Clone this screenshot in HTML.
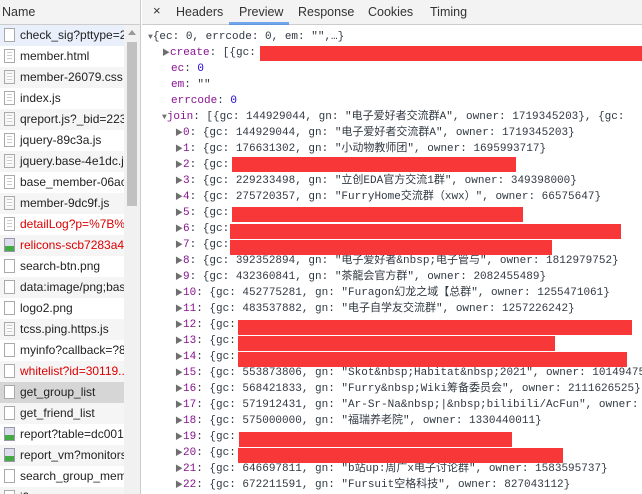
<!DOCTYPE html>
<html><head><meta charset="utf-8"><style>
*{margin:0;padding:0;box-sizing:border-box}
body{width:642px;height:494px;overflow:hidden;background:#fff;font-family:"Liberation Sans","Noto Sans CJK SC",sans-serif;position:relative}
#left{position:absolute;left:0;top:0;width:141px;height:494px;border-right:1px solid #ccc;overflow:hidden}
#lh{height:25px;background:#f3f3f3;border-bottom:1px solid #ccc;font-size:12.5px;color:#333;padding:5px 0 0 2px}
.r{position:absolute;left:0;width:124px;height:21px;font-size:12px;color:#222;line-height:21px;padding-left:20px;white-space:nowrap;overflow:hidden}
.r i{position:absolute;left:4px;top:3px;width:11px;height:14px;border:1px solid #aaa;background:#fff}
.r i.d{background:repeating-linear-gradient(#fff 0 2px,#ccc 2px 3px);background-clip:content-box;padding:2px}
.r i.img{border-color:#99a;background:linear-gradient(#dde 60%,#4a4 60%)}
.red{color:#d00}
#sb{position:absolute;left:124px;top:25px;width:16px;height:469px;background:#f1f1f1}
#th{position:absolute;left:3px;top:17px;width:10px;height:164px;background:#c1c1c1}
#tabs{position:absolute;left:142px;top:0;width:500px;height:25px;background:#f3f3f3;border-bottom:1px solid #ccc;font-size:12.5px;color:#333}
#tabs span{position:absolute;top:5px}
#pv{position:absolute;left:142px;top:25px;font-family:"Liberation Mono","Noto Sans CJK SC",monospace;font-size:11px;color:#303942;white-space:pre}
.l{position:absolute;height:16px;line-height:16px}
.k{color:#881391}.n{color:#1c00cf}.t{color:#6e6e6e;font-size:8px}
.bar{position:absolute;background:#f83838;height:15px}
</style></head><body>
<div id="left"><div id="lh">Name</div>
<div class="r" style="top:25px;background:#e9f0fb"><i></i>check_sig?pttype=2</div>
<div class="r" style="top:46px"><i class="d"></i>member.html</div>
<div class="r" style="top:67px;background:#f5f5f5"><i class="d"></i>member-26079.css</div>
<div class="r" style="top:88px"><i class="d"></i>index.js</div>
<div class="r" style="top:109px;background:#f5f5f5"><i class="d"></i>qreport.js?_bid=223</div>
<div class="r" style="top:130px"><i class="d"></i>jquery-89c3a.js</div>
<div class="r" style="top:151px;background:#f5f5f5"><i class="d"></i>jquery.base-4e1dc.js</div>
<div class="r" style="top:172px"><i class="d"></i>base_member-06ac</div>
<div class="r" style="top:193px;background:#f5f5f5"><i class="d"></i>member-9dc9f.js</div>
<div class="r red" style="top:214px"><i class="d"></i>detailLog?p=%7B%</div>
<div class="r red" style="top:235px;background:#f5f5f5"><i class="img"></i>relicons-scb7283a4</div>
<div class="r" style="top:256px"><i></i>search-btn.png</div>
<div class="r" style="top:277px;background:#f5f5f5"><i></i>data:image/png;bas</div>
<div class="r" style="top:298px"><i></i>logo2.png</div>
<div class="r" style="top:319px;background:#f5f5f5"><i class="d"></i>tcss.ping.https.js</div>
<div class="r" style="top:340px"><i></i>myinfo?callback=?8</div>
<div class="r red" style="top:361px;background:#f5f5f5"><i></i>whitelist?id=30119..</div>
<div class="r" style="top:382px;background:#d6d6d6"><i></i>get_group_list</div>
<div class="r" style="top:403px;background:#f5f5f5"><i></i>get_friend_list</div>
<div class="r" style="top:424px"><i class="img"></i>report?table=dc001</div>
<div class="r" style="top:445px;background:#f5f5f5"><i class="img"></i>report_vm?monitors</div>
<div class="r" style="top:466px"><i></i>search_group_mem</div>
<div class="r" style="top:487px;background:#f5f5f5"><i></i>i9</div>
<div id="sb"><div id="th"></div><div style="position:absolute;left:4px;top:5px;border:4px solid transparent;border-bottom:5px solid #999;border-top:0"></div></div>
</div>
<div id="tabs"><span style="left:11px;font-size:13px;top:3px">×</span><span style="left:34px">Headers</span><span style="left:97px">Preview</span><span style="left:156px">Response</span><span style="left:226px">Cookies</span><span style="left:288px">Timing</span>
<div style="position:absolute;left:87px;top:22px;width:60px;height:3px;background:#1a73e8;opacity:.6"></div></div>
<div id="pv">
<div class="l" style="top:4px;left:6px"><span class="t">▼</span>{ec: 0, errcode: 0, em: "",…}</div>
<div class="l" style="top:20px;left:20px"><span class="t">▶</span><span class="k">create</span>: [{gc: </div>
<div class="l" style="top:36px;left:29px"><span class="k">ec</span>: <span class="n">0</span></div>
<div class="l" style="top:52px;left:29px"><span class="k">em</span>: ""</div>
<div class="l" style="top:68px;left:29px"><span class="k">errcode</span>: <span class="n">0</span></div>
<div class="l" style="top:84px;left:20px"><span class="t">▼</span><span class="k">join</span>: [{gc: 144929044, gn: "电子爱好者交流群A", owner: 1719345203}, {gc:</div>
<div class="l" style="top:100px;left:33px"><span class="t">▶</span><span class="k">0</span>: {gc: 144929044, gn: "电子爱好者交流群A", owner: 1719345203}</div>
<div class="l" style="top:116px;left:33px"><span class="t">▶</span><span class="k">1</span>: {gc: 176631302, gn: "小动物教师团", owner: 1695993717}</div>
<div class="l" style="top:132px;left:33px"><span class="t">▶</span><span class="k">2</span>: {gc:</div>
<div class="l" style="top:148px;left:33px"><span class="t">▶</span><span class="k">3</span>: {gc: 229233498, gn: "立创EDA官方交流1群", owner: 349398000}</div>
<div class="l" style="top:164px;left:33px"><span class="t">▶</span><span class="k">4</span>: {gc: 275720357, gn: "FurryHome交流群（xwx）", owner: 66575647}</div>
<div class="l" style="top:180px;left:33px"><span class="t">▶</span><span class="k">5</span>: {gc:</div>
<div class="l" style="top:196px;left:33px"><span class="t">▶</span><span class="k">6</span>: {gc:</div>
<div class="l" style="top:212px;left:33px"><span class="t">▶</span><span class="k">7</span>: {gc:</div>
<div class="l" style="top:228px;left:33px"><span class="t">▶</span><span class="k">8</span>: {gc: 392352894, gn: "电子爱好者&amp;nbsp;电子管与", owner: 1812979752}</div>
<div class="l" style="top:244px;left:33px"><span class="t">▶</span><span class="k">9</span>: {gc: 432360841, gn: "茶龍会官方群", owner: 2082455489}</div>
<div class="l" style="top:260px;left:33px"><span class="t">▶</span><span class="k">10</span>: {gc: 452775281, gn: "Furagon幻龙之域【总群", owner: 1255471061}</div>
<div class="l" style="top:276px;left:33px"><span class="t">▶</span><span class="k">11</span>: {gc: 483537882, gn: "电子自学友交流群", owner: 1257226242}</div>
<div class="l" style="top:292px;left:33px"><span class="t">▶</span><span class="k">12</span>: {gc:</div>
<div class="l" style="top:308px;left:33px"><span class="t">▶</span><span class="k">13</span>: {gc:</div>
<div class="l" style="top:324px;left:33px"><span class="t">▶</span><span class="k">14</span>: {gc:</div>
<div class="l" style="top:340px;left:33px"><span class="t">▶</span><span class="k">15</span>: {gc: 553873806, gn: "Skot&amp;nbsp;Habitat&amp;nbsp;2021", owner: 10149475</div>
<div class="l" style="top:356px;left:33px"><span class="t">▶</span><span class="k">16</span>: {gc: 568421833, gn: "Furry&amp;nbsp;Wiki筹备委员会", owner: 2111626525}</div>
<div class="l" style="top:372px;left:33px"><span class="t">▶</span><span class="k">17</span>: {gc: 571912431, gn: "Ar-Sr-Na&amp;nbsp;|&amp;nbsp;bilibili/AcFun", owner:</div>
<div class="l" style="top:388px;left:33px"><span class="t">▶</span><span class="k">18</span>: {gc: 575000000, gn: "福瑞养老院", owner: 1330440011}</div>
<div class="l" style="top:404px;left:33px"><span class="t">▶</span><span class="k">19</span>: {gc:</div>
<div class="l" style="top:420px;left:33px"><span class="t">▶</span><span class="k">20</span>: {gc:</div>
<div class="l" style="top:436px;left:33px"><span class="t">▶</span><span class="k">21</span>: {gc: 646697811, gn: "b站up:周广x电子讨论群", owner: 1583595737}</div>
<div class="l" style="top:452px;left:33px"><span class="t">▶</span><span class="k">22</span>: {gc: 672211591, gn: "Fursuit空格科技", owner: 827043112}</div>
</div>
<div class="bar" style="left:260px;top:46px;width:382px"></div>
<div class="bar" style="left:232px;top:157px;width:284px"></div>
<div class="bar" style="left:232px;top:207px;width:291px"></div>
<div class="bar" style="left:230px;top:224px;width:391px"></div>
<div class="bar" style="left:230px;top:240px;width:322px"></div>
<div class="bar" style="left:238px;top:320px;width:394px"></div>
<div class="bar" style="left:238px;top:336px;width:317px"></div>
<div class="bar" style="left:238px;top:352px;width:389px"></div>
<div class="bar" style="left:239px;top:432px;width:273px"></div>
<div class="bar" style="left:238px;top:448px;width:325px"></div>
</body></html>
